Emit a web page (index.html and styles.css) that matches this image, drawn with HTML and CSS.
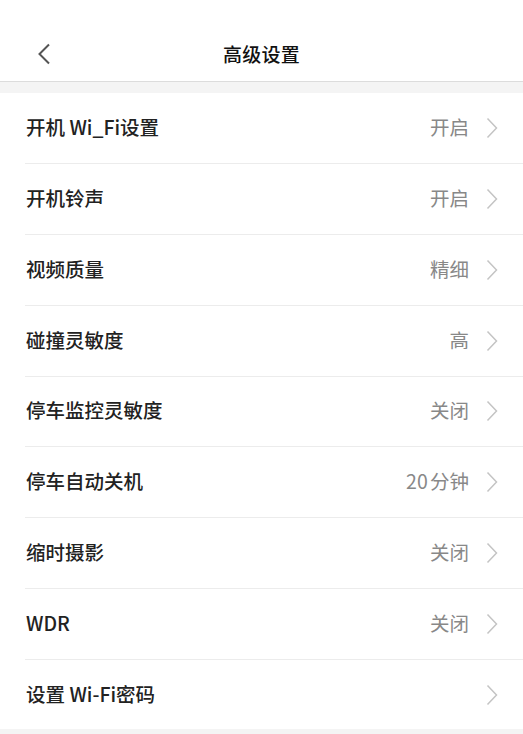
FILE: index.html
```html
<!DOCTYPE html>
<html lang="zh">
<head>
<meta charset="utf-8">
<link rel="stylesheet" href="styles.css">
</head>
<body>
<div class="page">
  <header class="nav">
    <svg class="back" width="14" height="22" viewBox="0 0 14 22"><path d="M12 1.5 L2.5 11 L12 20.5" fill="none" stroke="#555" stroke-width="2"/></svg>
    <h1 class="title">高级设置</h1>
  </header>
  <div class="band"></div>
  <ul class="list">
    <li class="row"><span class="label">开机 Wi_Fi设置</span><span class="value">开启</span><svg class="chev" width="12" height="22" viewBox="0 0 12 22"><path d="M1.5 1.5 L10.5 11 L1.5 20.5" fill="none" stroke="#c4c4c4" stroke-width="1.5"/></svg></li>
    <li class="row"><span class="label">开机铃声</span><span class="value">开启</span><svg class="chev" width="12" height="22" viewBox="0 0 12 22"><path d="M1.5 1.5 L10.5 11 L1.5 20.5" fill="none" stroke="#c4c4c4" stroke-width="1.5"/></svg></li>
    <li class="row"><span class="label">视频质量</span><span class="value">精细</span><svg class="chev" width="12" height="22" viewBox="0 0 12 22"><path d="M1.5 1.5 L10.5 11 L1.5 20.5" fill="none" stroke="#c4c4c4" stroke-width="1.5"/></svg></li>
    <li class="row"><span class="label">碰撞灵敏度</span><span class="value">高</span><svg class="chev" width="12" height="22" viewBox="0 0 12 22"><path d="M1.5 1.5 L10.5 11 L1.5 20.5" fill="none" stroke="#c4c4c4" stroke-width="1.5"/></svg></li>
    <li class="row"><span class="label">停车监控灵敏度</span><span class="value">关闭</span><svg class="chev" width="12" height="22" viewBox="0 0 12 22"><path d="M1.5 1.5 L10.5 11 L1.5 20.5" fill="none" stroke="#c4c4c4" stroke-width="1.5"/></svg></li>
    <li class="row"><span class="label">停车自动关机</span><span class="value">20<span class="thin"> </span>分钟</span><svg class="chev" width="12" height="22" viewBox="0 0 12 22"><path d="M1.5 1.5 L10.5 11 L1.5 20.5" fill="none" stroke="#c4c4c4" stroke-width="1.5"/></svg></li>
    <li class="row"><span class="label">缩时摄影</span><span class="value">关闭</span><svg class="chev" width="12" height="22" viewBox="0 0 12 22"><path d="M1.5 1.5 L10.5 11 L1.5 20.5" fill="none" stroke="#c4c4c4" stroke-width="1.5"/></svg></li>
    <li class="row"><span class="label">WDR</span><span class="value">关闭</span><svg class="chev" width="12" height="22" viewBox="0 0 12 22"><path d="M1.5 1.5 L10.5 11 L1.5 20.5" fill="none" stroke="#c4c4c4" stroke-width="1.5"/></svg></li>
    <li class="row"><span class="label">设置 Wi-Fi密码</span><span class="value"></span><svg class="chev" width="12" height="22" viewBox="0 0 12 22"><path d="M1.5 1.5 L10.5 11 L1.5 20.5" fill="none" stroke="#c4c4c4" stroke-width="1.5"/></svg></li>
  </ul>
  <div class="foot"></div>
</div>
</body>
</html>
```
FILE: styles.css
```css
* { box-sizing: border-box; }
html, body { margin: 0; padding: 0; background: #fff; }
body {
  font-family: "Noto Sans CJK SC", "Noto Sans", sans-serif;
  width: 523px;
  height: 734px;
  overflow: hidden;
}
.page { display: flex; flex-direction: column; }
.nav {
  height: 82px;
  border-bottom: 1.5px solid #dcdcdc;
  display: flex;
  align-items: center;
  justify-content: center;
  position: relative;
  padding-top: 26px;
}
.back { position: absolute; left: 37px; top: 43px; }
.title {
  margin: 0;
  font-size: 19px;
  font-weight: 500;
  color: #111;
  letter-spacing: 0.2px;
}
.band { height: 11px; background: #f4f4f4; }
.list { list-style: none; margin: 0; padding: 0 0 0 25px; }
.row {
  height: 70.875px;
  display: flex;
  align-items: center;
  border-bottom: 1px solid #ececec;
  padding-right: 25px;
}
.row:last-child { border-bottom: none; height: 69px; }
.label {
  flex: 1;
  font-size: 19.5px;
  font-weight: 500;
  color: #222;
  padding-bottom: 3px;
  padding-left: 1px;
}
.value {
  font-size: 19.5px;
  color: #888;
  margin-right: 17px;
  padding-bottom: 3px;
}
.thin { font-size: 10px; }
.chev { display: block; }
.foot { height: 10px; background: #f4f4f4; }
```
